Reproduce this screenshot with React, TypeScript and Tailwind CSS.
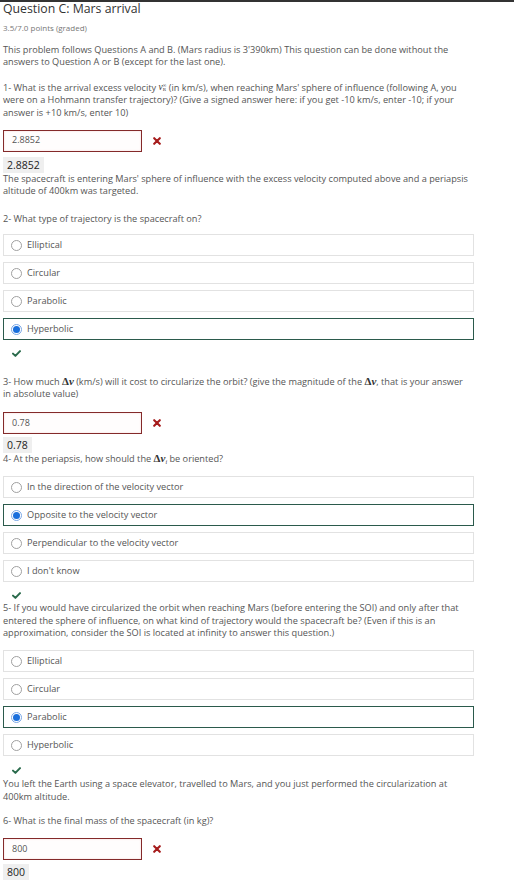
type Opt = { label: string; selected?: boolean };

function Radio({ selected }: { selected?: boolean }) {
    return selected ? (
        <span className="w-[11px] h-[11px] rounded-full border border-[#7aa7e6] bg-white flex items-center justify-center">
            <span className="w-[7px] h-[7px] rounded-full bg-[#1a6fdc]" />
        </span>
    ) : (
        <span className="w-[11px] h-[11px] rounded-full border border-[#a0a0a0] bg-white" />
    );
}

function Options({ items, className = "" }: { items: Opt[]; className?: string }) {
    return (
        <div className={`flex flex-col gap-[6px] w-[471px] ${className}`}>
            {items.map((o) => (
                <div
                    key={o.label}
                    className={`h-[22px] flex items-center gap-[5px] pl-[7px] border ${o.selected ? "border-[#2b5a4c]" : "border-[#e2e2e2]"}`}
                >
                    <Radio selected={o.selected} />
                    <span className="text-[9.2px] text-[#555]">{o.label}</span>
                </div>
            ))}
        </div>
    );
}

function Cross() {
    return (
        <svg width="8" height="8" viewBox="0 0 8 8" className="text-[#a61c1c]">
            <path d="M1.2 1.2 L6.8 6.8 M6.8 1.2 L1.2 6.8" stroke="currentColor" strokeWidth="2.1" strokeLinecap="round" />
        </svg>
    );
}

function AnswerInput({ value, className = "" }: { value: string; className?: string }) {
    return (
        <div className={className}>
            <div className="flex items-center gap-[11px]">
                <div className="w-[139px] h-[22px] border border-[#842a2a] bg-[#fffdfd] shadow-[inset_0_0_2px_#f2d6d6] flex items-center px-[8px] text-[9px] text-[#555]">
                    {value}
                </div>
                <Cross />
            </div>
        </div>
    );
}

function Badge({ value, className = "" }: { value: string; className?: string }) {
    return (
        <div className={`inline-block h-[16px] leading-[16px] px-[4px] bg-[#efefef] text-[10.5px] text-[#222] ${className}`}>
            {value}
        </div>
    );
}

function Check({ className = "" }: { className?: string }) {
    return (
        <div className={`h-[13px] flex items-center pl-[9px] ${className}`}>
            <svg width="9" height="7" viewBox="0 0 9 7" className="text-[#2a6b4c]">
                <path d="M1 3.6 L3.4 5.9 L8 1.1" fill="none" stroke="currentColor" strokeWidth="2" strokeLinecap="round" strokeLinejoin="round" />
            </svg>
        </div>
    );
}

function Dv({ sub }: { sub?: boolean }) {
    return (
        <b className="font-['Liberation_Serif',serif] text-[11px] leading-none text-[#333]">
            Δ<i>v</i>
            {sub && <sub className="text-[6px] leading-none font-normal italic">i</sub>}
        </b>
    );
}

export default function App() {
    const trajectories = ["Elliptical", "Circular", "Parabolic", "Hyperbolic"];
    return (
        <div className="w-[514px] min-h-[890px] bg-white font-['Open_Sans',sans-serif] text-[#555] text-[9.2px] leading-[12.7px]">
            <div className="h-[2px] bg-[#333]" />
            <div className="px-[3px]">
                <h2 className="text-[12.3px] leading-[14px] text-[#333]">Question C: Mars arrival</h2>
                <div className="mt-[6px] leading-[12px] text-[8px] text-[#777]">3.5/7.0 points (graded)</div>

                <p className="mt-[9.5px] max-w-[474px]">
                    This problem follows Questions A and B. (Mars radius is 3'390km) This question can be done without the answers to Question A or B (except for the last one).
                </p>
                <p className="mt-[12.7px] max-w-[474px]">
                    1- What is the arrival excess velocity{" "}
                    <span className="inline-flex items-center align-middle leading-none font-['Liberation_Serif',serif] text-[#333]">
                        <i className="text-[9.5px]">v</i>
                        <span className="inline-flex flex-col leading-[4px] text-[5px]">
                            <span>∞</span>
                            <span>R</span>
                        </span>
                    </span>{" "}
                    (in km/s), when reaching Mars' sphere of influence (following A, you were on a Hohmann transfer trajectory)? (Give a signed answer here: if you get -10 km/s, enter -10; if your answer is +10 km/s, enter 10)
                </p>
                <AnswerInput value="2.8852" className="mt-[10px]" />
                <Badge value="2.8852" className="mt-[5px]" />
                <p className="max-w-[474px]">
                    The spacecraft is entering Mars' sphere of influence with the excess velocity computed above and a periapsis altitude of 400km was targeted.
                </p>
                <p className="mt-[14.6px]">2- What type of trajectory is the spacecraft on?</p>
                <Options
                    className="mt-[8.7px]"
                    items={trajectories.map((t) => ({ label: t, selected: t === "Hyperbolic" }))}
                />
                <Check className="mt-[6.5px]" />

                <p className="mt-[16px] max-w-[466px]">
                    3- How much <Dv /> (km/s) will it cost to circularize the orbit? (give the magnitude of the <Dv />, that is your answer in absolute value)
                </p>
                <AnswerInput value="0.78" className="mt-[11px]" />
                <Badge value="0.78" className="mt-[3px]" />
                <p>
                    4- At the periapsis, how should the <Dv sub /> be oriented?
                </p>
                <Options
                    className="mt-[10.7px]"
                    items={[
                        { label: "In the direction of the velocity vector" },
                        { label: "Opposite to the velocity vector", selected: true },
                        { label: "Perpendicular to the velocity vector" },
                        { label: "I don't know" },
                    ]}
                />
                <Check className="mt-[6.5px]" />
                <p className="max-w-[474px]">
                    5- If you would have circularized the orbit when reaching Mars (before entering the SOI) and only after that entered the sphere of influence, on what kind of trajectory would the spacecraft be? (Even if this is an approximation, consider the SOI is located at infinity to answer this question.)
                </p>
                <Options
                    className="mt-[10.3px]"
                    items={trajectories.map((t) => ({ label: t, selected: t === "Parabolic" }))}
                />
                <Check className="mt-[7.5px]" />
                <p className="mt-[1px] max-w-[474px]">
                    You left the Earth using a space elevator, travelled to Mars, and you just performed the circularization at 400km altitude.
                </p>
                <p className="mt-[11.6px]">6- What is the final mass of the spacecraft (in kg)?</p>
                <AnswerInput value="800" className="mt-[10.7px]" />
                <Badge value="800" className="mt-[4px]" />
            </div>
        </div>
    );
}
